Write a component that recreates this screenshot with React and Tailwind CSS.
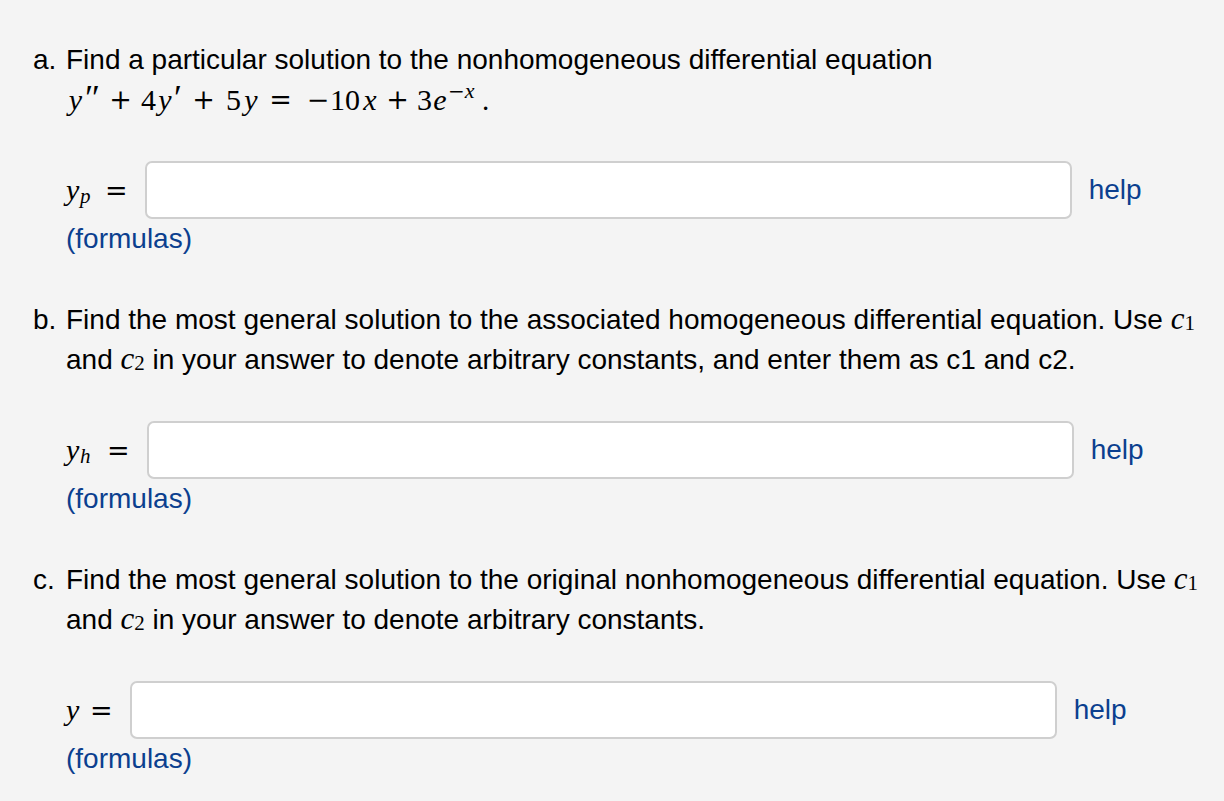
const sans = { fontFamily: '"Liberation Sans", Arial, sans-serif' }
const serif = { fontFamily: '"Liberation Serif", "Times New Roman", serif' }
const opFont = { fontFamily: '"DejaVu Serif", "Liberation Serif", serif' }

// equation tokens: text, kind, box classes (margin + width)
const eq = [
  ['y', 'v', 'w-[19px]'],
  ['″', 'p', 'w-[23px]'],
  ['+', 'o', 'ml-[1px] w-[23px]'],
  ['4', 'n', 'ml-[9px] w-[15px]'],
  ['y', 'v', 'w-[18px]'],
  ['′', 'p', 'w-[16px]'],
  ['+', 'o', 'ml-[2px] w-[23px]'],
  ['5', 'n', 'ml-[11px] w-[14px]'],
  ['y', 'v', 'w-[22px]'],
  ['=', 'o', 'ml-[6px] w-[25px]'],
  ['−', 'o', 'ml-[13px] w-[24px]'],
  ['1', 'n', 'w-[15px]'],
  ['0', 'n', 'w-[15px]'],
  ['x', 'v', 'w-[20px]'],
  ['+', 'o', 'ml-[6px] w-[23px]'],
  ['3', 'n', 'ml-[8px] w-[15px]'],
  ['e', 'v', 'w-[16px]'],
]

const Token = ({ t, kind, cls }) => {
  if (kind === 'o')
    return (
      <span className={`${cls} inline-block text-center text-[27px]`} style={opFont}>
        {t}
      </span>
    )
  if (kind === 'p')
    return (
      <span className={`${cls} inline-block text-[36px] leading-none relative top-[-2px]`} style={serif}>
        {t}
      </span>
    )
  return (
    <span
      className={`${cls} inline-block text-[30px] ${kind === 'v' ? 'italic text-center' : ''}`}
      style={serif}
    >
      {t}
    </span>
  )
}

const C = ({ n }) => (
  <span className="text-[31px] leading-none" style={serif}>
    <span className="italic">c</span>
    <sub className="text-[21px] leading-none not-italic relative top-[1px]">{n}</sub>
  </span>
)

const Answer = ({ sub }) => (
  <div className="ml-[33px] mt-[41px]">
    <div className="flex items-center">
      <div className="flex items-center leading-none" style={serif}>
        <span className="italic text-[30px] w-[14px]">y</span>
        {sub && (
          <span className={`italic text-[21px] relative top-[6px] ${sub === 'h' ? 'w-[27px]' : 'w-[25px]'}`}>
            {sub}
          </span>
        )}
        <span className={`text-[27px] ${sub ? '' : 'ml-[10px]'}`} style={opFont}>
          =
        </span>
      </div>
      <input
        type="text"
        className="ml-[17px] w-[927px] h-[58px] bg-white border-2 border-[#cfcfcf] rounded-[7px] outline-none"
      />
      <a className="ml-[17px] text-[#0b3f8f] text-[28px]" href="#">
        help
      </a>
    </div>
    <a className="block text-[#0b3f8f] text-[28px] leading-[40px]" href="#">
      (formulas)
    </a>
  </div>
)

const Section = ({ letter, children, answer }) => (
  <div className="mb-[41px]">
    <div className="flex text-[28px] leading-[40px] text-black">
      <div className="w-[33px] shrink-0">{letter}.</div>
      <div>{children}</div>
    </div>
    {answer}
  </div>
)

export default function App() {
  return (
    <div className="min-h-[801px] bg-[#f4f4f4] pt-[40px] pl-[33px] pr-[4px]" style={sans}>
      <Section letter="a" answer={<Answer sub="p" />}>
        <div>Find a particular solution to the nonhomogeneous differential equation</div>
        <div className="h-[40px] flex items-center whitespace-nowrap">
          {eq.map(([t, k, cls], i) => (
            <Token key={i} t={t} kind={k} cls={cls} />
          ))}
          <span className="inline-block w-[34px] relative top-[-9px] text-[20px]">
            <span style={opFont}>−</span>
            <span className="italic text-[22px]" style={serif}>
              x
            </span>
          </span>
          <span className="text-[29px]" style={serif}>
            .
          </span>
        </div>
      </Section>

      <Section letter="b" answer={<Answer sub="h" />}>
        <div className="h-[40px]">
          Find the most general solution to the associated homogeneous differential equation. Use <C n="1" />
        </div>
        <div className="h-[40px]">
          and <C n="2" /> in your answer to denote arbitrary constants, and enter them as c1 and c2.
        </div>
      </Section>

      <Section letter="c" answer={<Answer />}>
        <div className="h-[40px]">
          Find the most general solution to the original nonhomogeneous differential equation. Use <C n="1" />
        </div>
        <div className="h-[40px]">
          and <C n="2" /> in your answer to denote arbitrary constants.
        </div>
      </Section>
    </div>
  )
}
